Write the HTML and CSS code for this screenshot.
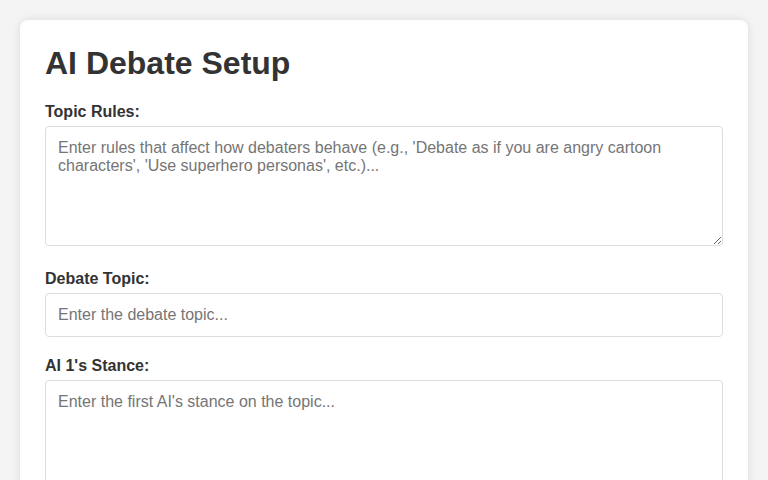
FILE: index.html
```
<!DOCTYPE html>
<html lang="en">
<head>
<meta charset="utf-8">
<title>AI Debate Setup</title>
<link rel="stylesheet" href="styles.css">
</head>
<body>
<div class="container">
  <h1 class="title">AI Debate Setup</h1>
  <div class="group group-area">
    <label class="label" for="rules">Topic Rules:</label>
    <textarea id="rules" class="field area" placeholder="Enter rules that affect how debaters behave (e.g., 'Debate as if you are angry cartoon characters', 'Use superhero personas', etc.)..."></textarea>
  </div>
  <div class="group">
    <label class="label" for="topic">Debate Topic:</label>
    <input id="topic" class="field" type="text" placeholder="Enter the debate topic...">
  </div>
  <div class="group group-area">
    <label class="label" for="stance1">AI 1's Stance:</label>
    <textarea id="stance1" class="field area" placeholder="Enter the first AI's stance on the topic..."></textarea>
  </div>
</div>
</body>
</html>
```
FILE: styles.css
```
html, body {
  margin: 0;
  padding: 0;
}
body {
  background: #f4f4f4;
  font-family: "Liberation Sans", Arial, sans-serif;
  color: #333;
  padding: 20px;
}
.container {
  background: #fff;
  border-radius: 8px;
  box-shadow: 0 0 10px rgba(0, 0, 0, 0.1);
  padding: 25px;
}
.title {
  margin: 0 0 21.44px 0;
  font-size: 32px;
  font-weight: bold;
  color: #333;
}
.group {
  margin-bottom: 20px;
}
.group-area {
  margin-bottom: 24px;
}
.label {
  display: block;
  font-weight: bold;
  font-size: 16px;
  margin-bottom: 5px;
  color: #333;
}
.field {
  display: block;
  width: 100%;
  box-sizing: border-box;
  padding: 12px;
  border: 1px solid #ddd;
  border-radius: 4px;
  font-family: "Liberation Sans", Arial, sans-serif;
  font-size: 16px;
  color: #333;
  margin: 0;
}
.area {
  height: 120px;
  resize: vertical;
}
.field::placeholder {
  color: #757575;
}
```
